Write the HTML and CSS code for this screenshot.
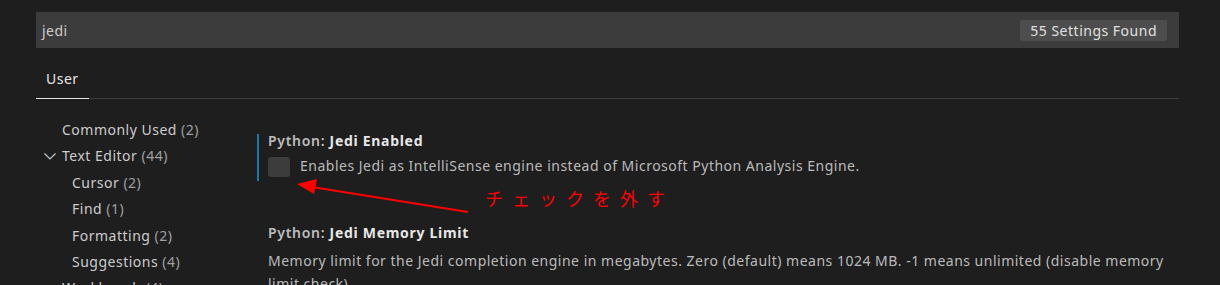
FILE: index.html
```html
<!DOCTYPE html>
<html lang="ja">
    <head>
        <meta charset="UTF-8" />
        <title>Settings</title>
        <link rel="stylesheet" href="styles.css">
    </head>
    <body>
        <div class="page">
            <div class="search">
                <span class="search-text">jedi</span>
                <span class="count">55 Settings Found</span>
            </div>

            <div class="tabs">
                <div class="tab active">User</div>
            </div>

            <div class="main">
                <ul class="tree">
                    <li class="lvl1">Commonly Used <span class="num">(2)</span></li>
                    <li class="lvl1">
                        <svg class="chev" width="12" height="7" viewBox="0 0 12 7">
                            <path d="M0.5 0.5 L6 6 L11.5 0.5" fill="none" stroke="#c5c5c5" stroke-width="1.2" />
                        </svg>
                        Text Editor <span class="num">(44)</span>
                    </li>
                    <li class="lvl2">Cursor <span class="num">(2)</span></li>
                    <li class="lvl2">Find <span class="num">(1)</span></li>
                    <li class="lvl2">Formatting <span class="num">(2)</span></li>
                    <li class="lvl2">Suggestions <span class="num">(4)</span></li>
                    <li class="lvl1">Workbench <span class="num">(4)</span></li>
                </ul>

                <div class="settings">
                    <div class="setting focused">
                        <div class="title"><span class="cat">Python: </span>Jedi Enabled</div>
                        <div class="bool-row">
                            <span class="checkbox"></span>
                            <span class="desc">Enables Jedi as IntelliSense engine instead of Microsoft Python Analysis Engine.</span>
                        </div>
                    </div>

                    <div class="setting">
                        <div class="title"><span class="cat">Python: </span>Jedi Memory Limit</div>
                        <div class="desc">Memory limit for the Jedi completion engine in megabytes. Zero (default) means 1024 MB. -1 means unlimited (disable memory limit check)</div>
                    </div>
                </div>
            </div>
        </div>

        <!-- 注釈 -->
        <svg class="arrow" width="1220" height="285" viewBox="0 0 1220 285">
            <line x1="468" y1="212" x2="312" y2="187" stroke="#ff0000" stroke-width="2" />
            <polygon points="297,184 317,179 314,194" fill="#ff0000" />
        </svg>
        <div class="note">チェックを外す</div>
    </body>
</html>
```

FILE: styles.css
```css
body {
  margin: 0;
  background-color: #1e1e1e;
  color: #cccccc;
  font-family: "Noto Sans", "Open Sans", sans-serif;
  font-size: 13px;
  overflow: hidden;
  height: 285px;
}

.page {
  padding: 12px 41px 0 36px;
}

.search {
  height: 36px;
  background-color: #3c3c3c;
  display: flex;
  align-items: center;
  justify-content: space-between;
  padding: 0 12px 0 6px;
}

.search-text {
  font-size: 14px;
  letter-spacing: 0.5px;
  color: #cccccc;
}

.count {
  background-color: #4d4d4d;
  color: #e0e0e0;
  font-size: 14px;
  letter-spacing: 0.5px;
  padding: 1px 10px;
  border-radius: 2px;
  line-height: 19px;
}

.tabs {
  margin-top: 12px;
  height: 38px;
  border-bottom: 1px solid #3c3c3c;
  display: flex;
}

.tab {
  padding: 0 10px;
  line-height: 37px;
  font-size: 14px;
  letter-spacing: 0.5px;
  color: #e7e7e7;
}

.tab.active {
  border-bottom: 1px solid #e7e7e7;
  margin-bottom: -1px;
}

.main {
  display: flex;
}

.tree {
  list-style: none;
  margin: 18px 0 0 0;
  padding: 0;
  width: 221px;
  flex-shrink: 0;
}

.tree li {
  height: 26.4px;
  line-height: 26px;
  font-size: 14px;
  letter-spacing: 0.5px;
  color: #cccccc;
  position: relative;
}

.tree .num {
  color: #a0a0a0;
}

.lvl1 {
  padding-left: 26px;
}

.lvl2 {
  padding-left: 36px;
}

.chev {
  position: absolute;
  left: 8px;
  top: 10px;
}

.settings {
  flex: 1;
  padding-top: 35px;
}

.setting {
  padding: 0 0 0 9px;
  border-left: 2px solid transparent;
  margin-bottom: 45px;
}

.setting.focused {
  border-left-color: #0e7bb0;
  padding-bottom: 4px;
}

.title {
  font-size: 14px;
  font-weight: bold;
  letter-spacing: 0.7px;
  color: #e7e7e7;
  line-height: 14px;
  margin-bottom: 9px;
}

.cat {
  color: #bdbdbd;
  font-weight: 600;
}

.bool-row {
  display: flex;
  align-items: flex-start;
}

.checkbox {
  width: 22px;
  height: 20px;
  flex-shrink: 0;
  background-color: #3c3c3c;
  border-radius: 3px;
  margin-right: 10px;
}

.desc {
  color: #bbbbbb;
  font-size: 14px;
  letter-spacing: 0.5px;
  line-height: 23px;
}

.bool-row .desc {
  line-height: 17px;
}

.arrow {
  position: absolute;
  left: 0;
  top: 0;
  pointer-events: none;
}

.note {
  position: absolute;
  left: 485px;
  top: 185px;
  font-family: "Noto Sans CJK JP", sans-serif;
  font-size: 18px;
  letter-spacing: 9px;
  color: #ff0000;
}
```
